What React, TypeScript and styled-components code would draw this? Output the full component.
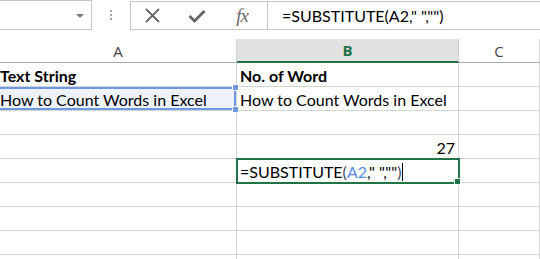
import styled, { createGlobalStyle } from "styled-components";

const GlobalStyle = createGlobalStyle`
  html, body {
    margin: 0;
    padding: 0;
    background: #fff;
    overflow: hidden;
  }
  body {
    font-family: "Lato", "Liberation Sans", sans-serif;
  }
`;

const cellFont = `"Lato", "Liberation Sans", sans-serif`;

const Page = styled.div`
  width: 540px;
  height: 259px;
  overflow: hidden;
  position: relative;
`;

const FormulaBar = styled.div`
  display: flex;
  height: 30px;
  box-sizing: border-box;
  align-items: stretch;
`;

const NameBox = styled.div`
  width: 92px;
  box-sizing: border-box;
  border: 1px solid #c6c6c6;
  border-left: none;
  display: flex;
  align-items: center;
  justify-content: flex-end;
  padding-right: 7px;
`;

const Caret = styled.div`
  width: 0;
  height: 0;
  border-left: 4px solid transparent;
  border-right: 4px solid transparent;
  border-top: 4px solid #777;
  margin-top: 1px;
`;

const Grip = styled.div`
  width: 38px;
  display: flex;
  flex-direction: column;
  align-items: center;
  justify-content: center;
  gap: 2px;
  span {
    width: 2px;
    height: 2px;
    background: #a6a6a6;
  }
`;

const Buttons = styled.div`
  width: 138px;
  box-sizing: border-box;
  margin-top: 1px;
  height: 29px;
  border: 1px solid #c6c6c6;
  display: flex;
  align-items: center;
  gap: 15px;
  padding: 0 6px;
`;

const IconBtn = styled.div`
  width: 30px;
  display: flex;
  justify-content: center;
  align-items: center;
`;

const Fx = styled.span`
  font-family: "Liberation Serif", serif;
  font-style: italic;
  font-size: 19px;
  color: #6a6a6a;
  letter-spacing: -1px;
`;

const FormulaInput = styled.div`
  flex: 1;
  margin-top: 1px;
  height: 29px;
  box-sizing: border-box;
  border: 1px solid #c6c6c6;
  border-left: none;
  border-right: none;
  display: flex;
  align-items: center;
  padding-left: 14px;
  font-family: ${cellFont};
  font-size: 16px;
  color: #000;
  white-space: pre;
`;

const Sheet = styled.div`
  margin-top: 9px;
  display: grid;
  grid-template-columns: 237px 222px 1fr;
`;

const ColHead = styled.div<{ $active?: boolean }>`
  height: 24px;
  box-sizing: border-box;
  display: flex;
  align-items: center;
  justify-content: center;
  font-family: "Open Sans", "Liberation Sans", sans-serif;
  font-size: 15px;
  background: ${(p) => (p.$active ? "#e1e1e1" : "#fff")};
  color: ${(p) => (p.$active ? "#217346" : "#444")};
  font-weight: ${(p) => (p.$active ? 700 : 400)};
  border-bottom: ${(p) => (p.$active ? "2px solid #217346" : "1px solid #ababab")};
  border-right: 1px solid #d4d4d4;
`;

const Cell = styled.div<{ $bold?: boolean; $right?: boolean; $ref?: boolean }>`
  position: relative;
  height: 24px;
  box-sizing: border-box;
  border-right: 1px solid #d4d4d4;
  border-bottom: 1px solid #d4d4d4;
  display: flex;
  align-items: flex-end;
  justify-content: ${(p) => (p.$right ? "flex-end" : "flex-start")};
  padding: 0 3px 1px 3px;
  font-family: ${cellFont};
  font-size: 16px;
  font-weight: ${(p) => (p.$bold ? 700 : 400)};
  color: #000;
  white-space: pre;
  background: ${(p) => (p.$ref ? "#edf2fb" : "transparent")};
  ${(p) =>
    p.$ref
      ? `
    box-shadow: inset 0 2px 0 #6e98e0, inset 0 -2px 0 #6e98e0, inset -2px 0 0 #6e98e0;
  `
      : ""}
`;

const FirstCell = styled(Cell)`
  padding-left: 0;
`;

const Handle = styled.span<{ $color: string; $top?: boolean }>`
  position: absolute;
  right: -3px;
  ${(p) => (p.$top ? "top: -3px;" : "bottom: -3px;")}
  width: 5px;
  height: 5px;
  background: ${(p) => p.$color};
  border: 1px solid #fff;
  z-index: 3;
`;

const ActiveCell = styled(Cell)`
  outline: 2px solid #217346;
  outline-offset: -1px;
  z-index: 2;
`;

const RefText = styled.span`
  color: #5b8be0;
`;

const ParenText = styled.span`
  color: #3d4a5c;
`;

const Cursor = styled.span`
  display: inline-block;
  align-self: center;
  width: 1px;
  height: 18px;
  background: #000;
  margin-left: 1px;
  margin-top: 3px;
`;

function XIcon() {
  return (
    <svg width="17" height="17" viewBox="0 0 17 17">
      <path d="M2 2 L15 15 M15 2 L2 15" stroke="#666" strokeWidth="1.8" fill="none" />
    </svg>
  );
}

function CheckIcon() {
  return (
    <svg width="18" height="14" viewBox="0 0 18 14">
      <path d="M1.5 7 L6.5 12 L16.5 2" stroke="#666" strokeWidth="2.8" fill="none" />
    </svg>
  );
}

const rows: [string, string, { bold?: boolean; right?: boolean }?][] = [
  ["Text String", "No. of Word", { bold: true }],
  ["How to Count Words in Excel", "How to Count Words in Excel"],
  ["", ""],
  ["", "27", { right: true }],
];

export default function App() {
  return (
    <Page>
      <GlobalStyle />
      <FormulaBar>
        <NameBox>
          <Caret />
        </NameBox>
        <Grip>
          <span />
          <span />
          <span />
        </Grip>
        <Buttons>
          <IconBtn>
            <XIcon />
          </IconBtn>
          <IconBtn>
            <CheckIcon />
          </IconBtn>
          <IconBtn>
            <Fx>fx</Fx>
          </IconBtn>
        </Buttons>
        <FormulaInput>=SUBSTITUTE(A2," ","")</FormulaInput>
      </FormulaBar>
      <Sheet>
        <ColHead>A</ColHead>
        <ColHead $active>B</ColHead>
        <ColHead>C</ColHead>
        {rows.map(([a, b, opt], i) => {
          const isRef = i === 1;
          return [
            <FirstCell key={`a${i}`} $bold={opt?.bold} $ref={isRef}>
              {a}
              {isRef && <Handle $color="#6e98e0" $top />}
              {isRef && <Handle $color="#6e98e0" />}
            </FirstCell>,
            <Cell key={`b${i}`} $bold={opt?.bold} $right={opt?.right}>
              {b}
            </Cell>,
            <Cell key={`c${i}`} />,
          ];
        })}
        <FirstCell />
        <ActiveCell>
          =SUBSTITUTE<ParenText>(</ParenText>
          <RefText>A2</RefText>
          {`," ",""`}
          <ParenText>)</ParenText>
          <Cursor />
          <Handle $color="#217346" />
        </ActiveCell>
        <Cell />
        {[0, 1, 2, 3].map((r) => [
          <FirstCell key={`ea${r}`} />,
          <Cell key={`eb${r}`} />,
          <Cell key={`ec${r}`} />,
        ])}
      </Sheet>
    </Page>
  );
}
